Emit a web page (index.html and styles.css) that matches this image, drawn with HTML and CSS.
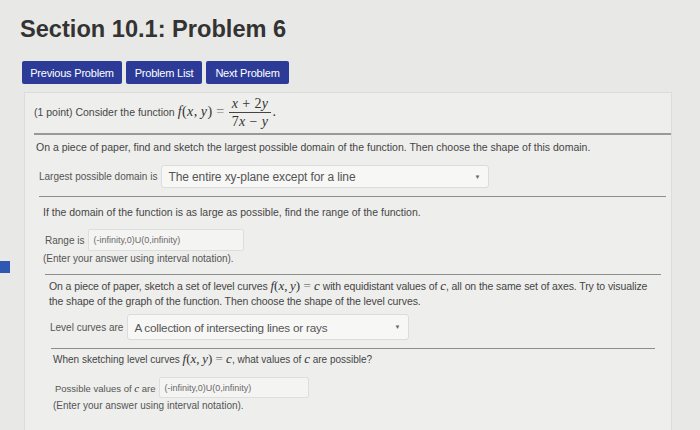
FILE: index.html
```html
<!DOCTYPE html>
<html>
<head>
<meta charset="utf-8">
<link rel="stylesheet" href="styles.css">
</head>
<body>
<div class="marker"></div>
<h1 class="title">Section 10.1: Problem 6</h1>
<nav class="nav">
  <a class="btn btn-prev">Previous Problem</a>
  <a class="btn btn-list">Problem List</a>
  <a class="btn btn-next">Next Problem</a>
</nav>
<div class="problem">
  <div class="intro">
    <span>(1 point) Consider the function</span>
    <span class="math fx"><i>f</i>(<i>x</i>,&thinsp;<i>y</i>) <span class="eq">=</span></span>
    <span class="math frac"><span class="num"><i>x</i> + 2<i>y</i></span><span class="den">7<i>x</i> − <i>y</i></span></span><span class="math dot">.</span>
  </div>
  <div class="rule r1"></div>

  <div class="part p1">
    <p class="text">On a piece of paper, find and sketch the largest possible domain of the function. Then choose the shape of this domain.</p>
    <div class="answer a1">
      <span class="label">Largest possible domain is</span>
      <div class="select s1"><span>The entire xy-plane except for a line</span><span class="caret">▼</span></div>
    </div>
  </div>
  <div class="rule r2"></div>

  <div class="part p2">
    <p class="text">If the domain of the function is as large as possible, find the range of the function.</p>
    <div class="answer a2">
      <span class="label">Range is</span>
      <div class="input i1">(-infinity,0)U(0,infinity)</div>
    </div>
    <p class="hint">(Enter your answer using interval notation).</p>
  </div>
  <div class="rule r3"></div>

  <div class="part p3">
    <p class="text">On a piece of paper, sketch a set of level curves <span class="math"><i>f</i>(<i>x</i>,&thinsp;<i>y</i>) <span class="eq">=</span> <i>c</i></span> with equidistant values of <span class="math"><i>c</i></span>, all on the same set of axes. Try to visualize<br>the shape of the graph of the function. Then choose the shape of the level curves.</p>
    <div class="answer a3">
      <span class="label">Level curves are</span>
      <div class="select s2"><span>A collection of intersecting lines or rays</span><span class="caret">▼</span></div>
    </div>
  </div>
  <div class="rule r4"></div>

  <div class="part p4">
    <p class="text">When sketching level curves <span class="math"><i>f</i>(<i>x</i>,&thinsp;<i>y</i>) <span class="eq">=</span> <i>c</i></span>, what values of <span class="math"><i>c</i></span> are possible?</p>
    <div class="answer a4">
      <span class="label">Possible values of <span class="math small"><i>c</i></span> are</span>
      <div class="input i2">(-infinity,0)U(0,infinity)</div>
    </div>
    <p class="hint">(Enter your answer using interval notation).</p>
  </div>
</div>
</body>
</html>
```

FILE: styles.css
```css
html, body {
  margin: 0;
  padding: 0;
}
body {
  background: #e8e8e6;
  font-family: "Liberation Sans", Arial, sans-serif;
  color: #474747;
  height: 430px;
  overflow: hidden;
  position: relative;
}
.marker {
  position: absolute;
  left: 0;
  top: 261px;
  width: 10px;
  height: 12px;
  background: #2f58b3;
}
.title {
  margin: 15px 0 0 20px;
  font-size: 23.6px;
  line-height: 28px;
  font-weight: bold;
  color: #333;
}
.nav {
  display: flex;
  gap: 4px;
  margin: 18px 0 0 22px;
}
.btn {
  height: 23px;
  background: #2c3b98;
  color: #fff;
  font-size: 11px;
  letter-spacing: -0.2px;
  display: flex;
  align-items: center;
  justify-content: center;
  border-radius: 2px;
}
.btn-prev { width: 100px; }
.btn-list { width: 76px; }
.btn-next { width: 83px; }

.problem {
  margin: 8px 0 0 24px;
  width: 648px;
  height: 340px;
  background: #eeeeec;
  border: 1px solid #dcdcdb;
  border-bottom: none;
  box-sizing: border-box;
}
.intro {
  display: flex;
  align-items: center;
  height: 38px;
  margin-left: 9px;
  font-size: 10.5px;
}
.math {
  font-family: "Liberation Serif", "Times New Roman", serif;
  font-size: 13px;
  color: #333;
  letter-spacing: 0;
}
.intro .math { font-size: 14px; letter-spacing: 0.4px; }
.math.small { font-size: 11px; }
.fx { margin-left: 3px; }
.eq { color: #777; }
.frac {
  display: inline-flex;
  flex-direction: column;
  align-items: center;
  margin-left: 4px;
}
.num {
  padding: 0 3px 1px;
  border-bottom: 1px solid #444;
  line-height: 15px;
}
.den {
  padding: 1px 3px 0;
  line-height: 15px;
}
.dot { margin-left: 1px; }

.rule {
  height: 1px;
  background: #8d8d8d;
}
.r1 { margin: 2px 0 0 9px; height: 2px; background: #999; }
.r2 { margin: 8px 5px 0 14px; }
.r3 { margin: 9px 10px 0 20px; }
.r4 { margin: 8px 16px 0 26px; }

.part p { margin: 0; }
.text {
  font-size: 10.5px;
  line-height: 14px;
  color: #454545;
}
.hint {
  font-size: 10px;
  line-height: 13px;
  color: #555;
}
.p1 { margin: 5px 0 0 11px; }
.p2 { margin: 8px 0 0 18px; }
.p3 { margin: 3px 0 0 24px; }
.p4 { margin: 3px 0 0 28px; }
.p3 .text { line-height: 15px; letter-spacing: -0.1px; }
.p4 .text { font-size: 10px; }
.p4 .label { font-size: 9.5px; }

.answer {
  display: flex;
  align-items: center;
  gap: 4px;
}
.label {
  font-size: 10px;
  color: #555;
}
.a1 { margin: 11px 0 0 3px; }
.a2 { margin: 10px 0 0 2px; }
.a3 { margin: 5px 0 0 1px; }
.a4 { margin: 10px 0 0 2px; }

.select {
  display: flex;
  align-items: center;
  justify-content: space-between;
  box-sizing: border-box;
  background: #f7f7f6;
  border: 1px solid #dcdcdc;
  border-radius: 3px;
  color: #555;
  font-size: 12px;
  letter-spacing: -0.1px;
  padding: 0 8px 0 6px;
}
.s1 { width: 328px; height: 23px; }
.s2 { width: 282px; height: 26px; }
.s2 span:first-child { font-size: 11.7px; letter-spacing: -0.2px; }
.caret {
  font-size: 6px;
  color: #666;
}
.input {
  box-sizing: border-box;
  background: #f4f4f3;
  border: 1px solid #dedede;
  border-radius: 2px;
  color: #6a6a6a;
  font-size: 9px;
  display: flex;
  align-items: center;
  padding-left: 4px;
}
.i1 { width: 156px; height: 22px; }
.i2 { width: 150px; height: 21px; }
.a2 + .hint { margin-top: 1px; }
.a4 + .hint { margin-top: 1px; }
```
